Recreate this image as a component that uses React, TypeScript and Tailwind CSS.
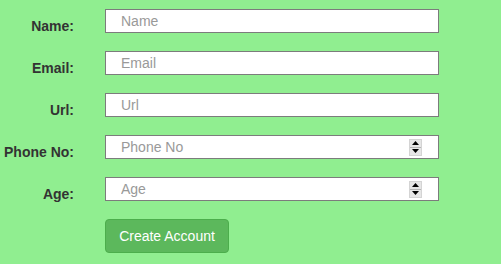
import React from 'react';

type Field = { label: string; placeholder: string; type: string };

const fields: Field[] = [
  { label: 'Name:', placeholder: 'Name', type: 'text' },
  { label: 'Email:', placeholder: 'Email', type: 'email' },
  { label: 'Url:', placeholder: 'Url', type: 'url' },
  { label: 'Phone No:', placeholder: 'Phone No', type: 'number' },
  { label: 'Age:', placeholder: 'Age', type: 'number' },
];

function Spinner() {
  return (
    <div className="flex flex-col w-[13px] h-[17px] mr-[16px] border border-[#d4d4d4] bg-[#e6e6e6]">
      <div className="flex-1 flex items-center justify-center border-b border-[#b5b5b5]">
        <svg width="7" height="4" viewBox="0 0 7 4">
          <path d="M3.5 0 L7 4 L0 4 Z" fill="#000" />
        </svg>
      </div>
      <div className="flex-1 flex items-center justify-center">
        <svg width="7" height="4" viewBox="0 0 7 4">
          <path d="M0 0 L7 0 L3.5 4 Z" fill="#000" />
        </svg>
      </div>
    </div>
  );
}

export default function App() {
  return (
    <div
      className="min-h-screen bg-[#90ee90] pt-[9px]"
      style={{ fontFamily: '"Liberation Sans", Arial, sans-serif' }}
    >
      {fields.map((f) => (
        <div key={f.label} className="flex h-6 mb-[18px]">
          <label className="w-[74px] h-6 text-right pt-[7px] text-[14px] leading-5 font-bold text-[#333] whitespace-nowrap">
            {f.label}
          </label>
          <div className="ml-[31px] w-[334px] h-6 flex items-center bg-white border border-[#7c7c7c]">
            <input
              type="text"
              placeholder={f.placeholder}
              className="flex-1 min-w-0 h-full pl-[15px] text-[14px] text-[#333] placeholder:text-[#999] outline-none bg-transparent"
            />
            {f.type === 'number' && <Spinner />}
          </div>
        </div>
      ))}
      <div className="pl-[105px]">
        <button className="w-[124px] h-[34px] px-3 bg-[#5cb85c] border border-[#4cae4c] rounded text-white text-[14px]">
          Create Account
        </button>
      </div>
    </div>
  );
}
